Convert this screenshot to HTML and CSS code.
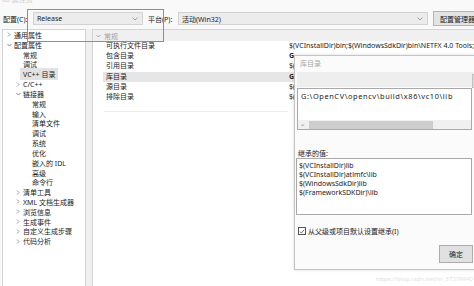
FILE: index.html
```html
<!DOCTYPE html>
<html lang="zh-CN">
<head>
    <meta charset="UTF-8">
    <meta name="viewport" content="width=device-width, initial-scale=1.0">
    <title>lib 属性页</title>
    <link rel="stylesheet" href="styles.css">
</head>
<body>
    <div class="caption">lib 属性页</div>
    <div class="config-bar">
        <span class="bar-label">配置(C):</span>
        <div class="combo combo-config">
            <span>Release</span>
            <svg class="combo-arrow" width="6" height="4" viewBox="0 0 6 4"><polyline points="0.5,0.5 3,3 5.5,0.5" fill="none" stroke="#8a8a8a" stroke-width="0.8"/></svg>
        </div>
        <span class="bar-label platform-label">平台(P):</span>
        <div class="combo combo-platform">
            <span>活动(Win32)</span>
            <svg class="combo-arrow" width="6" height="4" viewBox="0 0 6 4"><polyline points="0.5,0.5 3,3 5.5,0.5" fill="none" stroke="#8a8a8a" stroke-width="0.8"/></svg>
        </div>
        <button class="manager-btn">配置管理器(O)...</button>
    </div>
    <div class="panes">
        <ul class="tree">
            <li class="item lvl1"><span class="twisty"><svg width="4" height="5" viewBox="0 0 4 5"><polyline points="1,0.5 3,2.5 1,4.5" fill="none" stroke="#777" stroke-width="0.7"/></svg></span>通用属性</li>
            <li class="item lvl1"><span class="twisty"><svg width="5" height="4" viewBox="0 0 5 4"><polyline points="0.5,1 2.5,3 4.5,1" fill="none" stroke="#555" stroke-width="0.7"/></svg></span>配置属性</li>
            <li class="item lvl2"><span class="twisty"></span>常规</li>
            <li class="item lvl2"><span class="twisty"></span>调试</li>
            <li class="item lvl2"><span class="twisty"></span><span class="selected">VC++ 目录</span></li>
            <li class="item lvl2"><span class="twisty"><svg width="4" height="5" viewBox="0 0 4 5"><polyline points="1,0.5 3,2.5 1,4.5" fill="none" stroke="#777" stroke-width="0.7"/></svg></span>C/C++</li>
            <li class="item lvl2"><span class="twisty"><svg width="5" height="4" viewBox="0 0 5 4"><polyline points="0.5,1 2.5,3 4.5,1" fill="none" stroke="#555" stroke-width="0.7"/></svg></span>链接器</li>
            <li class="item lvl3"><span class="twisty"></span>常规</li>
            <li class="item lvl3"><span class="twisty"></span>输入</li>
            <li class="item lvl3"><span class="twisty"></span>清单文件</li>
            <li class="item lvl3"><span class="twisty"></span>调试</li>
            <li class="item lvl3"><span class="twisty"></span>系统</li>
            <li class="item lvl3"><span class="twisty"></span>优化</li>
            <li class="item lvl3"><span class="twisty"></span>嵌入的 IDL</li>
            <li class="item lvl3"><span class="twisty"></span>高级</li>
            <li class="item lvl3"><span class="twisty"></span>命令行</li>
            <li class="item lvl2"><span class="twisty"><svg width="4" height="5" viewBox="0 0 4 5"><polyline points="1,0.5 3,2.5 1,4.5" fill="none" stroke="#777" stroke-width="0.7"/></svg></span>清单工具</li>
            <li class="item lvl2"><span class="twisty"><svg width="4" height="5" viewBox="0 0 4 5"><polyline points="1,0.5 3,2.5 1,4.5" fill="none" stroke="#777" stroke-width="0.7"/></svg></span>XML 文档生成器</li>
            <li class="item lvl2"><span class="twisty"><svg width="4" height="5" viewBox="0 0 4 5"><polyline points="1,0.5 3,2.5 1,4.5" fill="none" stroke="#777" stroke-width="0.7"/></svg></span>浏览信息</li>
            <li class="item lvl2"><span class="twisty"><svg width="4" height="5" viewBox="0 0 4 5"><polyline points="1,0.5 3,2.5 1,4.5" fill="none" stroke="#777" stroke-width="0.7"/></svg></span>生成事件</li>
            <li class="item lvl2"><span class="twisty"><svg width="4" height="5" viewBox="0 0 4 5"><polyline points="1,0.5 3,2.5 1,4.5" fill="none" stroke="#777" stroke-width="0.7"/></svg></span>自定义生成步骤</li>
            <li class="item lvl2"><span class="twisty"><svg width="4" height="5" viewBox="0 0 4 5"><polyline points="1,0.5 3,2.5 1,4.5" fill="none" stroke="#777" stroke-width="0.7"/></svg></span>代码分析</li>
        </ul>
        <div class="splitter"></div>
        <div class="grid">
            <div class="grid-head">
                <svg width="5" height="4" viewBox="0 0 5 4"><polyline points="0.5,1 2.5,3 4.5,1" fill="none" stroke="#888" stroke-width="0.7"/></svg>
                <span>常规</span>
            </div>
            <div class="grid-row"><span class="name">可执行文件目录</span><span class="value">$(VCInstallDir)bin;$(WindowsSdkDir)bin\NETFX 4.0 Tools;$(WindowsSdkDir)bin</span></div>
            <!-- the dialog covers these values, only the first letters show -->
            <div class="grid-row"><span class="name">包含目录</span><span class="value bold">G</span></div>
            <div class="grid-row"><span class="name">引用目录</span><span class="value">$(</span></div>
            <div class="grid-row selected-row"><span class="name">库目录</span><span class="value bold">G</span></div>
            <div class="grid-row"><span class="name">源目录</span><span class="value">$(</span></div>
            <div class="grid-row"><span class="name">排除目录</span><span class="value">$(</span></div>
            <div class="grid-end"></div>
        </div>
    </div>

    <div class="dialog">
        <div class="dialog-title">库目录</div>
        <div class="dialog-tools"><span class="tool-btn"></span></div>
        <div class="edit-box">
            <div class="edit-text">G:\OpenCV\opencv\build\x86\vc10\lib</div>
            <div class="hscroll">
                <span class="scroll-left">&lt;</span>
                <span class="scroll-thumb"></span>
            </div>
        </div>
        <div class="inherit-label">继承的值:</div>
        <div class="inherit-box">
            <div>$(VCInstallDir)lib</div>
            <div>$(VCInstallDir)atlmfc\lib</div>
            <div>$(WindowsSdkDir)lib</div>
            <div>$(FrameworkSDKDir)\lib</div>
        </div>
        <label class="inherit-check">
            <span class="checkbox"><svg width="7" height="7" viewBox="0 0 7 7"><polyline points="1,3.6 2.8,5.4 6,1.4" fill="none" stroke="#333" stroke-width="0.8"/></svg></span>
            从父级或项目默认设置继承(I)
        </label>
        <div class="dialog-buttons"><button class="ok-btn">确定</button></div>
    </div>

    <div class="mark-box"></div>
    <div class="watermark">https://blog.csdn.net/m_37379940</div>
</body>
</html>
```

FILE: styles.css
```css
body {
    margin: 0;
    width: 474px;
    height: 286px;
    overflow: hidden;
    position: relative;
    background-color: #f9f9f9;
    font-family: "Noto Sans", "Noto Sans CJK SC", sans-serif;
    font-size: 7px;
    color: #222;
}
.caption {
    height: 8px;
    line-height: 0;
    overflow: hidden;
    padding-left: 2px;
    color: #cfcfcf;
}
.config-bar {
    display: flex;
    align-items: center;
    height: 21px;
    padding-left: 3px;
}
.config-bar > * {
    flex-shrink: 0;
}
.bar-label {
    width: 30px;
    white-space: nowrap;
}
.platform-label {
    margin-left: 5px;
}
.combo {
    display: flex;
    align-items: center;
    justify-content: space-between;
    box-sizing: border-box;
    height: 13px;
    padding: 0 4px 0 3px;
    background-color: #ececec;
    border: 1px solid #d2d2d2;
}
.combo-config {
    width: 110px;
}
.combo-platform {
    width: 250px;
}
.manager-btn {
    box-sizing: border-box;
    width: 60px;
    height: 15px;
    margin-left: 5px;
    padding: 0 0 0 6px;
    text-align: left;
    white-space: nowrap;
    overflow: hidden;
    font: inherit;
    color: #222;
    background-color: #e3e3e3;
    border: 1px solid #b4b4b4;
}
.panes {
    display: flex;
    height: 257px;
}
.tree {
    list-style: none;
    margin: 0 0 0 2px;
    padding: 0;
    width: 82px;
    flex-shrink: 0;
    background-color: #fff;
    border: 1px solid #d4d4d4;
    border-bottom: none;
}
.item {
    display: flex;
    align-items: center;
    height: 9.84px;
    white-space: nowrap;
}
.lvl1 {
    padding-left: 4px;
}
.lvl2 {
    padding-left: 13px;
}
.lvl3 {
    padding-left: 22px;
}
.twisty {
    display: flex;
    align-items: center;
    width: 7px;
    flex-shrink: 0;
}
.selected {
    margin-left: -3px;
    padding: 1px 3px;
    background-color: #e2e2e2;
}
.splitter {
    width: 6px;
    flex-shrink: 0;
    background-color: #f0f0f0;
}
.grid {
    flex: 1;
    min-width: 0;
    background-color: #fff;
    border-top: 1px solid #d4d4d4;
    border-left: 1px solid #d4d4d4;
    overflow: hidden;
}
.grid-head {
    display: flex;
    align-items: center;
    gap: 3px;
    height: 11px;
    padding-left: 3px;
    background-color: #f0f0f0;
    color: #a0a0a0;
}
.grid-row {
    display: flex;
    height: 10.2px;
    line-height: 10.2px;
    white-space: nowrap;
}
.grid-row .name {
    box-sizing: border-box;
    width: 194px;
    flex-shrink: 0;
    padding-left: 13px;
}
.grid-row .value {
    padding-left: 2px;
}
.grid-row .bold {
    font-weight: bold;
}
.selected-row .name {
    margin-left: 10px;
    padding-left: 3px;
    width: 184px;
}
.selected-row .name,
.selected-row .value {
    background-color: #e6e6e6;
}
.selected-row .value {
    flex: 1;
}
.grid-end {
    margin: 9px 0 0 11px;
    width: 184px;
    border-top: 1px solid #ececec;
}
.dialog {
    position: absolute;
    left: 294px;
    top: 55px;
    width: 190px;
    height: 215px;
    box-sizing: border-box;
    padding-left: 2px;
    background-color: #fbfbfb;
    border: 1px solid #c4c4c4;
    box-shadow: 0 0 3px rgba(0, 0, 0, 0.15);
    display: flex;
    flex-direction: column;
}
.dialog-title {
    height: 15px;
    line-height: 15px;
    padding-left: 3px;
    color: #a8a8a8;
}
.dialog-tools {
    display: flex;
    height: 15px;
    margin-top: 1px;
    background-color: #eeeeee;
}
.tool-btn {
    margin: 2px 0 0 175px;
    width: 14px;
    height: 12px;
    background-color: #dcdcdc;
    border: 1px solid #c0c0c0;
}
.edit-box {
    display: flex;
    flex-direction: column;
    justify-content: space-between;
    box-sizing: border-box;
    width: 175px;
    height: 42px;
    margin-top: 1px;
    background-color: #fff;
    border: 1px solid #a9a9a9;
}
.edit-text {
    padding: 2px 0 0 3px;
    font-size: 7.4px;
    letter-spacing: 0.6px;
    white-space: nowrap;
}
.hscroll {
    display: flex;
    align-items: center;
    height: 9px;
    background-color: #f0f0f0;
    color: #666;
    font-size: 6px;
}
.scroll-left {
    width: 11px;
    padding-left: 3px;
    box-sizing: border-box;
}
.scroll-thumb {
    width: 124px;
    height: 8px;
    background-color: #cdcdcd;
}
.inherit-label {
    margin-top: 19px;
    height: 9px;
    line-height: 9px;
    padding-left: 1px;
}
.inherit-box {
    box-sizing: border-box;
    width: 176px;
    height: 57px;
    margin: 0 0 0 -1px;
    padding: 2px 0 0 2px;
    line-height: 9px;
    background-color: #fff;
    border: 1px solid #a9a9a9;
    white-space: nowrap;
}
.inherit-check {
    display: flex;
    align-items: center;
    gap: 2px;
    height: 10px;
    margin-top: 11px;
    padding-left: 1px;
}
.checkbox {
    display: flex;
    box-sizing: border-box;
    width: 8px;
    height: 8px;
    background-color: #fff;
    border: 1px solid #555;
}
.dialog-buttons {
    display: flex;
    margin-top: 9px;
    padding-left: 142px;
}
.ok-btn {
    width: 34px;
    height: 18px;
    padding: 0;
    font: inherit;
    color: #222;
    background-color: #e1e1e1;
    border: 1px solid #adadad;
}
.mark-box {
    position: absolute;
    left: 27px;
    top: 9px;
    width: 135px;
    height: 31px;
    border: 1px solid #e26a6f;
}
.watermark {
    position: absolute;
    left: 376px;
    top: 275px;
    font-size: 6px;
    color: #e2e2e2;
    white-space: nowrap;
}
```
